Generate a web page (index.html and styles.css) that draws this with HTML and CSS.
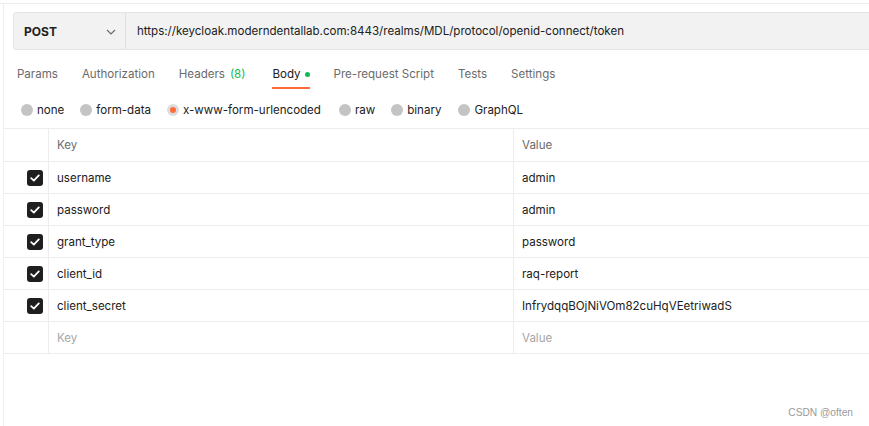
FILE: index.html
```html
<!DOCTYPE html>
<html>
<head>
<meta charset="utf-8">
<link rel="stylesheet" href="styles.css">
</head>
<body>
<div class="page">
  <div class="topline"></div>
  <div class="panel">
    <div class="urlbar">
      <div class="method">
        <span class="method-name">POST</span>
        <svg class="chev" width="10" height="6" viewBox="0 0 10 6"><path d="M1 1 L5 5 L9 1" fill="none" stroke="#6b6b6b" stroke-width="1.2"/></svg>
      </div>
      <div class="url">https://keycloak.moderndentallab.com:8443/realms/MDL/protocol/openid-connect/token</div>
    </div>
    <div class="tabs">
      <span class="tab t-params">Params</span>
      <span class="tab t-auth">Authorization</span>
      <span class="tab t-headers">Headers<span class="count">(8)</span></span>
      <span class="tab t-body active">Body<span class="dot"></span></span>
      <span class="tab t-pre">Pre-request Script</span>
      <span class="tab t-tests">Tests</span>
      <span class="tab t-settings">Settings</span>
    </div>
    <div class="radios">
      <span class="radio"><span class="circle"></span>none</span>
      <span class="radio"><span class="circle"></span>form-data</span>
      <span class="radio r-url"><span class="circle on"></span>x-www-form-urlencoded</span>
      <span class="radio"><span class="circle"></span>raw</span>
      <span class="radio r-bin"><span class="circle"></span>binary</span>
      <span class="radio"><span class="circle"></span>GraphQL</span>
    </div>
    <div class="table">
      <div class="row head">
        <div class="c-check"></div>
        <div class="c-key">Key</div>
        <div class="c-val">Value</div>
      </div>
      <div class="row">
        <div class="c-check"><span class="cb"><svg width="10" height="8" viewBox="0 0 10 8"><path d="M1.2 4.2 L3.8 6.6 L8.8 1.4" fill="none" stroke="#fff" stroke-width="1.8" stroke-linecap="round" stroke-linejoin="round"/></svg></span></div>
        <div class="c-key">username</div>
        <div class="c-val">admin</div>
      </div>
      <div class="row">
        <div class="c-check"><span class="cb"><svg width="10" height="8" viewBox="0 0 10 8"><path d="M1.2 4.2 L3.8 6.6 L8.8 1.4" fill="none" stroke="#fff" stroke-width="1.8" stroke-linecap="round" stroke-linejoin="round"/></svg></span></div>
        <div class="c-key">password</div>
        <div class="c-val">admin</div>
      </div>
      <div class="row">
        <div class="c-check"><span class="cb"><svg width="10" height="8" viewBox="0 0 10 8"><path d="M1.2 4.2 L3.8 6.6 L8.8 1.4" fill="none" stroke="#fff" stroke-width="1.8" stroke-linecap="round" stroke-linejoin="round"/></svg></span></div>
        <div class="c-key">grant_type</div>
        <div class="c-val">password</div>
      </div>
      <div class="row">
        <div class="c-check"><span class="cb"><svg width="10" height="8" viewBox="0 0 10 8"><path d="M1.2 4.2 L3.8 6.6 L8.8 1.4" fill="none" stroke="#fff" stroke-width="1.8" stroke-linecap="round" stroke-linejoin="round"/></svg></span></div>
        <div class="c-key">client_id</div>
        <div class="c-val">raq-report</div>
      </div>
      <div class="row">
        <div class="c-check"><span class="cb"><svg width="10" height="8" viewBox="0 0 10 8"><path d="M1.2 4.2 L3.8 6.6 L8.8 1.4" fill="none" stroke="#fff" stroke-width="1.8" stroke-linecap="round" stroke-linejoin="round"/></svg></span></div>
        <div class="c-key">client_secret</div>
        <div class="c-val">InfrydqqBOjNiVOm82cuHqVEetriwadS</div>
      </div>
      <div class="row">
        <div class="c-check"></div>
        <div class="c-key ph">Key</div>
        <div class="c-val ph">Value</div>
      </div>
    </div>
  </div>
  <div class="watermark">CSDN @often</div>
</div>
</body>
</html>
```

FILE: styles.css
```css
html, body {
  margin: 0;
  padding: 0;
  background: #fff;
}
body {
  font-family: Inter, "Noto Sans", sans-serif;
  font-size: 11.55px;
  color: #212121;
  width: 869px;
  height: 426px;
  overflow: hidden;
}
.page {
  position: relative;
  height: 426px;
  padding-top: 3px;
  box-sizing: border-box;
  display: flex;
  flex-direction: column;
}
.topline {
  height: 1px;
  background: #ececec;
  flex: none;
}
.panel {
  flex: 1;
  margin-left: 3px;
  border-left: 1px solid #efefef;
  padding-top: 8px;
}
.urlbar {
  margin-left: 9px;
  height: 38px;
  box-sizing: border-box;
  border: 1px solid #e4e4e4;
  border-right: none;
  border-radius: 4px 0 0 4px;
  background: #f2f2f2;
  display: flex;
  align-items: center;
}
.method {
  width: 112px;
  height: 100%;
  box-sizing: border-box;
  border-right: 1px solid #e0e0e0;
  display: flex;
  align-items: center;
  padding-left: 10px;
  padding-right: 9px;
  justify-content: space-between;
  flex: none;
}
.method-name {
  font-weight: 700;
  font-size: 12px;
  color: #212121;
}
.chev { margin-top: 1px; }
.url {
  padding-left: 11px;
  color: #212121;
  white-space: nowrap;
}
.tabs {
  height: 40px;
  box-sizing: border-box;
  padding-top: 8px;
  display: flex;
  align-items: stretch;
  padding-left: 13px;
  gap: 24px;
}
.tab {
  display: flex;
  align-items: center;
  color: #6b6b6b;
  position: relative;
  white-space: nowrap;
}
.t-headers { margin-right: 3px; }
.count { color: #0cbb52; margin-left: 5px; }
.active { color: #212121; }
.active::after {
  content: "";
  position: absolute;
  left: 0;
  right: 0;
  bottom: 1px;
  height: 2px;
  background: #ff6c37;
}
.dot {
  width: 5px;
  height: 5px;
  border-radius: 50%;
  background: #0cbb52;
  margin-left: 4px;
  margin-top: 1px;
}
.radios {
  height: 38px;
  box-sizing: border-box;
  padding-top: 1px;
  display: flex;
  align-items: center;
  padding-left: 17px;
  gap: 16px;
}
.r-url { margin-right: 2px; }
.r-bin { margin-right: 1px; }
.radio {
  display: flex;
  align-items: center;
  color: #212121;
}
.circle {
  width: 12px;
  height: 12px;
  border-radius: 50%;
  background: #c4c4c4;
  margin-right: 4px;
  box-sizing: border-box;
}
.circle.on {
  background: #ff6c37;
  border: 3px solid #dcdcdc;
}
.table {
  border-top: 1px solid #ededed;
}
.row {
  display: flex;
  height: 32px;
  box-sizing: border-box;
  border-bottom: 1px solid #ededed;
}
.head { height: 33px; }
.c-check {
  width: 45px;
  flex: none;
  border-right: 1px solid #ededed;
  display: flex;
  align-items: center;
  justify-content: flex-end;
  padding-right: 5px;
  box-sizing: border-box;
}
.c-key {
  width: 465px;
  flex: none;
  border-right: 1px solid #ededed;
  display: flex;
  align-items: center;
  padding-left: 8px;
  box-sizing: border-box;
}
.c-val {
  flex: 1;
  display: flex;
  align-items: center;
  padding-left: 8px;
}
.head .c-key, .head .c-val { color: #6b6b6b; }
.ph { color: #a6a6a6; }
.cb {
  width: 16px;
  height: 16px;
  border-radius: 3px;
  background: #1f1f1f;
  display: flex;
  align-items: center;
  justify-content: center;
}
.watermark {
  position: absolute;
  right: 16px;
  bottom: 8px;
  font-family: "Liberation Sans", Arial, sans-serif;
  font-size: 10.2px;
  color: #9a9a9a;
}
```
